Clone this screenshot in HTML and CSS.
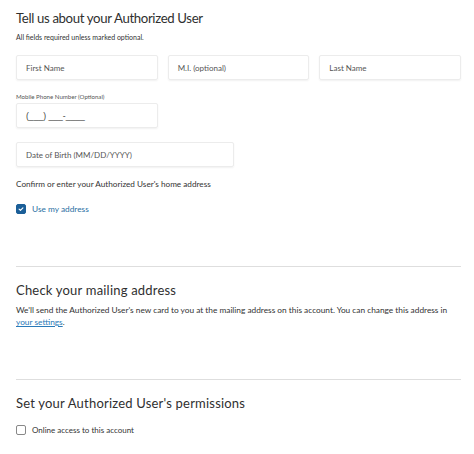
FILE: index.html
```html
<!DOCTYPE html>
<html lang="en">
<head>
<meta charset="utf-8">
<title>Authorized User</title>
<link rel="stylesheet" href="styles.css">
</head>
<body>
<main class="page">
  <section class="section first">
    <h1 class="title">Tell us about your Authorized User</h1>
    <p class="note">All fields required unless marked optional.</p>
    <div class="row three names">
      <div class="field"><span class="ph">First Name</span></div>
      <div class="field"><span class="ph">M.I. (optional)</span></div>
      <div class="field"><span class="ph">Last Name</span></div>
    </div>
    <div class="labelled">
      <label class="tiny">Mobile Phone Number (Optional)</label>
      <div class="row three">
        <div class="field"><span class="ph mask">(___) ___-____</span></div>
      </div>
    </div>
    <div class="row two dob">
      <div class="field"><span class="ph">Date of Birth (MM/DD/YYYY)</span></div>
    </div>
    <p class="body confirm">Confirm or enter your Authorized User's home address</p>
    <div class="check-row">
      <span class="box checked">
        <svg viewBox="0 0 10 10" width="10" height="10"><path d="M2.6 5.2 L4.3 6.8 L7.4 3.6" fill="none" stroke="#fff" stroke-width="1.4" stroke-linecap="round" stroke-linejoin="round"/></svg>
      </span>
      <span class="check-label blue">Use my address</span>
    </div>
  </section>
  <section class="section second">
    <h2 class="title2">Check your mailing address</h2>
    <p class="body para">We'll send the Authorized User's new card to you at the mailing address on this account. You can change this address in <a class="link" href="#">your settings</a>.</p>
  </section>
  <section class="section third">
    <h2 class="title2">Set your Authorized User's permissions</h2>
    <div class="check-row small">
      <span class="box"></span>
      <span class="check-label">Online access to this account</span>
    </div>
  </section>
</main>
</body>
</html>
```
FILE: styles.css
```css
* { box-sizing: border-box; }
html, body { margin: 0; padding: 0; background: #fff; }
body {
  font-family: Lato, "Open Sans", "Liberation Sans", sans-serif;
  color: #333;
}
.page { padding: 0 13px 0 16px; }
.section { display: flex; flex-direction: column; }
.first { padding-top: 9px; padding-bottom: 51px; border-bottom: 1px solid #dedede; }
.second { padding-top: 14px; padding-bottom: 51px; border-bottom: 1px solid #dedede; }
.third { padding-top: 14px; }

.title { margin: 0; font-size: 13.2px; line-height: 18px; font-weight: 400; color: #2f2f2f; letter-spacing: -0.35px; }
.note { margin: 5px 0 0; font-size: 7px; line-height: 10px; color: #333; }
.row { display: grid; gap: 10px; }
.row.three { grid-template-columns: repeat(3, 1fr); }
.row.three.names { margin-top: 13px; }
.row.two { grid-template-columns: repeat(2, 1fr); }
.field {
  height: 25px;
  border: 1px solid #ececec;
  border-radius: 2px;
  box-shadow: 0 1px 2px rgba(0,0,0,0.06);
  display: flex; align-items: center;
  padding-left: 9px;
}
.ph { font-size: 8px; color: #555; }
.mask { font-family: "Liberation Sans", Arial, sans-serif; font-size: 8.6px; color: #444; }
.labelled { margin-top: 13px; }
.tiny { display: block; font-size: 6.1px; line-height: 7px; color: #555; }
.labelled .row.three { margin-top: 3px; }
.dob { margin-top: 14px; }
.body { font-size: 8.2px; line-height: 12px; color: #333; margin: 0; }
.confirm { margin-top: 11px; }
.check-row { display: flex; align-items: center; gap: 6px; margin-top: 13px; }
.box {
  width: 10px; height: 10px; border-radius: 2px;
  border: 1px solid #888; background: #fff;
  display: inline-flex; align-items: center; justify-content: center;
}
.box.checked { background: #1b5f98; border-color: #1b5f98; }
.box svg { display: block; }
.check-label { font-size: 8.3px; line-height: 12px; }
.blue { color: #2a6fa3; }
.title2 { margin: 0; font-size: 13px; line-height: 18px; font-weight: 400; color: #2f2f2f; letter-spacing: 0.2px; }
.para { margin-top: 5px; font-size: 8.3px; }
.link { color: #2a7ab8; text-decoration: underline; }
.check-row.small { margin-top: 12px; }
.check-row.small .check-label { font-size: 8px; }
```
